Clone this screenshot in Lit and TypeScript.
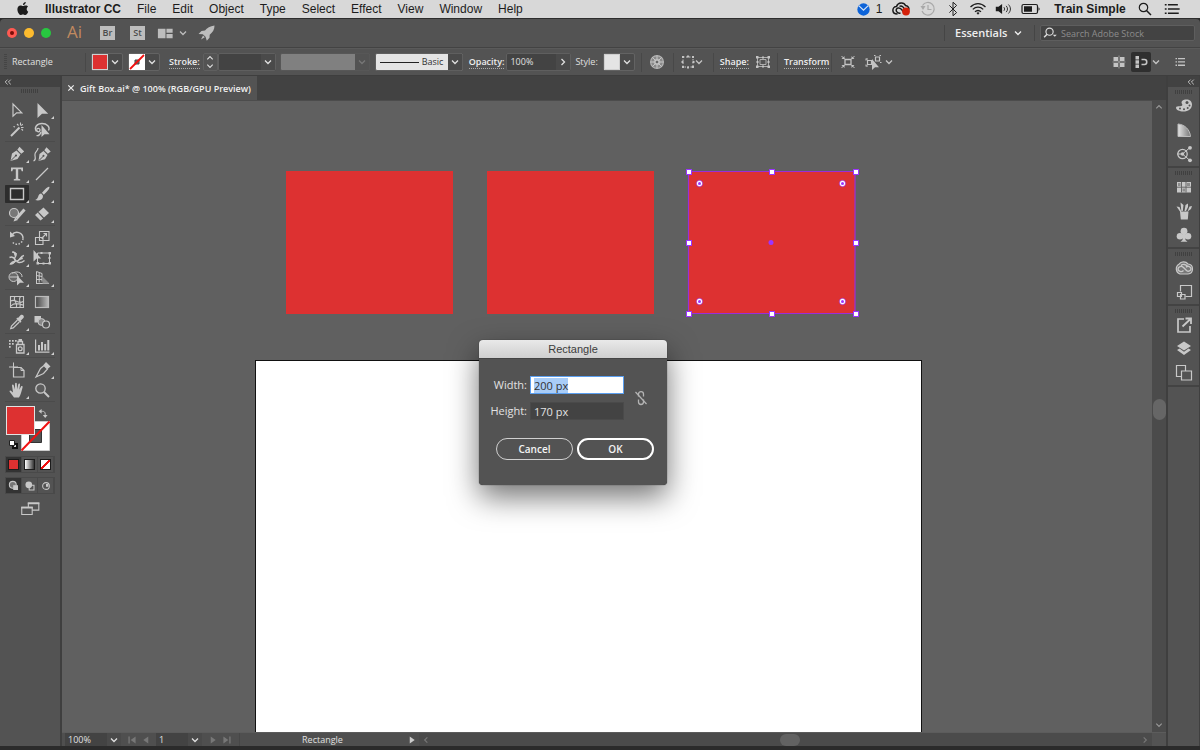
import { LitElement, html, svg, css, TemplateResult, SVGTemplateResult } from "lit";
import { customElement, property, query } from "lit/decorators.js";
import { classMap } from "lit/directives/class-map.js";

const S = (d: string, w = 1.3) => svg`<path d=${d} fill="none" stroke="currentColor" stroke-width=${w} />`;
const F = (d: string) => svg`<path d=${d} fill="currentColor" />`;

const ICONS: Record<string, SVGTemplateResult> = {
  select: S("M6 4v12.200l3.600-3.300h5.200z", 1.2),
  direct: F("M5.500 3v15l4.500-4.300h6.200z"),
  wand: svg`${S("M4 16 12.500 7.500", 2)}${S("M13.500 2.500v3M16.500 7.500h-2.500M15.800 4.200l-1.500 1.500M10 4l1.500 1.500M14.500 9l1.500 1.500M8 7l-1.500-.5", 1.1)}`,
  lasso: svg`${S("M4.500 11.500C1.500 7.500 5 3.500 10 3.500s8.500 3.500 6.500 7M4.500 9.500c1.500-2 4-1 3.500 1s-3.500 1.500-3-.5M9 12c-1 3-3 4-4.500 3.500", 1.300)}${F("M9.500 5v12l3-2.700h5z")}`,
  pen: svg`${F("M3.500 17 5 9.500 9.500 6.500l4 4L10.500 15 3.500 17zM10.300 5.700l2.200-2.900 4.700 4.700-2.900 2.200z")}<path d="M4 16.500 8.500 12" stroke="#535353" stroke-width="1"/><circle cx="9" cy="11.500" r="1.100" fill="#535353"/>`,
  curve: svg`${F("M6.500 17 7.500 10 11.500 7l4 4L13 15.200 6.500 17zM12.300 6.200l2.200-2.900 4.200 4.200-2.900 2.200z")}${S("M1.500 17c3.500-1 1-4 1.500-7 .3-2.500 3-3 3-6", 1.2)}<path d="M7 16.500 11.500 12" stroke="#535353"/><circle cx="11.500" cy="11.800" r="1" fill="#535353"/>`,
  type: F("M4 3.500h12v3.700h-1.300L14 5.200h-2.800v9.600l2 .4v1.300H6.800v-1.300l2-.4V5.200H6l-.7 2H4z"),
  line: S("M4 16 16 4", 1.3),
  rect: S("M3.500 4.500h13v11h-13z", 1.4),
  brush: F("M17.300 2.800c-1-.8-3.500 1.500-7.300 6l1.800 2c4.200-4 6.400-7 5.500-8zM9.200 9.600c-1.500.2-2.400 1-2.800 2.500-.4 1.500-1.200 3-3.200 4 3 .9 6.500.3 7.500-2.300.2-.8.3-1.500.2-2.300z"),
  shaper: svg`<circle cx="7" cy="9" r="4.500" fill="#777" stroke="currentColor" stroke-width="1.200"/>${S("M9.500 14.500 17.500 5.500", 3)}${F("M6.500 17.500l1.700-4.200 2.800 2.600z")}`,
  eraser: F("M3 11 11.500 3.500 17 9l-5 4.500L6.700 8l-.8.7 5.200 5.700-2.600 2.100z"),
  rotate: svg`${S("M5 7a6 6 0 0 1 11 3.500", 1.5)}<path d="M16 10.500A6 6 0 0 1 5 13.500" fill="none" stroke="currentColor" stroke-width="1.500" stroke-dasharray="1.500 1.500"/>${F("M3 3.500v6l5-1.500z")}`,
  scale: S("M7.500 3.500h9.500v9H7.500zM3.500 9.500h7.500v7H3.500zM9.500 10.500 14.500 5.500M11.500 5.500h3v3", 1.1),
  width: svg`${S("M5 4c3 0 5 2 3.500 4.500S7 13 10 13s3-5 7-5.500M2.500 9.500c3-1.500 4.500 0 6 2.500s4.500 4 9 .5M3 15.500c2 1 4-.5 5.500-3", 1.4)}${F("M2.500 16.500c2-3.500 4-4 7-3.500-2 1.500-3.500 4-7 3.500zM6 3l4 2.500L8 9zM10 13l5-5 1 3z")}`,
  transform: svg`${S("M5.500 5h12v10.500H5.500z", 1)}${F("M8.500 4h2v2h-2zM16.500 4h2.500v2.500h-2.500zM16.500 9h2v2h-2zM16.500 14h2.500v2.500h-2.500zM10.500 14.500h2v2h-2zM4.500 14h2.500v2.500H4.500z")}${F("M1.500 2v11.500l3.300-3h4.400z")}`,
  builder: svg`<circle cx="6.500" cy="9" r="4.500" fill="#6a6a6a" stroke="currentColor"/><path d="M5.500 5.500c3-3 10-1.500 9.500 3.500" fill="none" stroke="currentColor"/>${S("M3 9h9", 1)}${F("M10 7.500v10l3-2.700h4z")}`,
  perspective: svg`${S("M4.500 3.500v12M4.500 3.500 10 5.500v8M7.200 4.500v10M4.500 7.500 10 8.500M4.500 11.500h5.500M4 15.500h13", 1)}<path d="M10.500 8.500l7 7h-7z" fill="#8a8a8a"/>`,
  mesh: S("M3.500 4.500h13v11h-13zM4 9c4-3 7 4 12 .5M4 14c3-4 8-2 12-1M8 4.500c-3 4 4 7 1 11M13.500 4.500c-3 3 1 5-.5 11", 1.1),
  gradient: svg`<linearGradient id="tg"><stop offset="0" stop-color="#444"/><stop offset="1" stop-color="#bbb"/></linearGradient><rect x="3.500" y="4.500" width="13" height="11" fill="url(#tg)" stroke="#bbb" stroke-width="1.200"/>`,
  dropper: svg`${F("M11 6l2.700-3c1.800-1.200 4 .9 2.900 2.800L13.700 8.700l.8.800-1.200 1.200-4-4 1.200-1.200z")}${S("M10.500 8 4.500 14l-.8 2.700 2.500-.8L12.300 10", 1.200)}`,
  blend: svg`${F("M2.500 4h6.500v6.500H2.500z")}<circle cx="9.500" cy="10" r="3.400" fill="#888" stroke="currentColor"/><circle cx="14" cy="12.500" r="3.500" fill="#535353" stroke="currentColor" stroke-width="1.200"/>`,
  spray: svg`${S("M9.500 8.500h7.500v8.500H9.500zM11 8V5.500h4.500V8", 1.3)}${F("M11.500 3h3.500v2h-3.500zM2 4h1.700v1.700H2zM5 4h1.700v1.700H5zM8 4h1.700v1.700H8zM2 7h1.700v1.700H2zM5 7h1.700v1.700H5zM2 10h1.700v1.700H2z")}<circle cx="13.200" cy="12.700" r="1.900" fill="none" stroke="currentColor" stroke-width="1.300"/>`,
  graph: F("M3 3.500h1.200v12H17.500v1.200H3zM6 9h2v5.500H6zM9 6h2v8.500H9zM12.200 8h2v6.500h-2zM15.300 4h2v10.500h-2z"),
  artboard: svg`${S("M6.500 7.500h7.500l3 3v6.500H6.500z", 1.2)}${S("M14 7.500v3h3", 1)}${S("M2 7h9M6.500 2.500v9", 1)}`,
  slice: svg`${S("M4 17 8.500 8.500 12 5.500l3.500 3.500-4 4.500z", 1.2)}${F("M11.500 5l2.500-3 4.500 4.500L15.500 9z")}`,
  hand: F("M7 17.500c-1.500-2-3-4-4.500-6 0-1.200 1.300-1.100 2-.3l1.500 1.300L5 5.500c0-1.200 1.500-1.300 1.800-.1l1 4.100.3-5.900c.1-1.200 1.600-1.200 1.700 0l.3 5.600 1.200-5c.3-1.100 1.800-.8 1.700.4l-.7 5.200 1.700-3.200c.6-1 1.900-.4 1.600.7-1.200 4-1.600 7.500-3.600 10.200z"),
  zoom: svg`<circle cx="8.500" cy="8.500" r="4.700" fill="#5c5c5c" stroke="currentColor" stroke-width="1.300"/>${S("M12 12l5 5", 2)}`,
  palette: svg`${F("M9.500 4c4.500-1.500 8.500.5 8.500 4.500 0 4.500-4 7-8.500 7-4 0-7.500-1.500-7.500-3.700 0-1.600 2-1.300 4-1.500 2-.3 3-1 2-2.300C7 6.500 7.500 4.800 9.500 4z")}<g fill="#535353"><circle cx="13" cy="6.500" r="1.500"/><circle cx="15.500" cy="9.500" r="1"/><circle cx="13.700" cy="12" r="1"/><circle cx="10" cy="13.200" r="1"/><circle cx="6" cy="12.500" r="1"/></g>`,
  guide: svg`<linearGradient id="gg"><stop offset="0" stop-color="#e4e4e4"/><stop offset="1" stop-color="#777"/></linearGradient><path d="M4 4c7 .5 12 6 12.500 12.500H4z" fill="url(#gg)" stroke="#bbb"/>`,
  themes: svg`<circle cx="8.500" cy="10" r="4.700" fill="none" stroke="currentColor" stroke-width="1.300"/><circle cx="8.500" cy="10" r="1.800" fill="currentColor"/>${S("M8.500 10 16 3.500M8.500 10 16 16.500M3 10h5", 1)}<circle cx="16" cy="3.800" r="1.900" fill="currentColor"/><circle cx="16" cy="16.300" r="1.900" fill="currentColor"/>`,
  swatches: svg`${F("M3 5h14v10.500H3z")}<path d="M4 6h2.500v3H4zM13 6h3v3h-3zM8.500 11.500H11v3H8.500z" fill="#8d8d8d"/><path d="M3 10.200h14M7.500 5v10.500M12 5v10.500" stroke="#666"/>`,
  brushes: F("M6 10.500h8.500l-.7 8H6.800zM6.500 1.500l3 2.500-.7 6H7.300zM2.500 5.500l3 .5 1.800 4.500H6zM11.500 4l2.500-1.500V6l-2 4h-1.500zM15.500 5.500l2.500-.5-1 3-3.500 2.500z"),
  symbols: svg`<g fill="currentColor"><circle cx="10" cy="6.200" r="3.400"/><circle cx="6" cy="11.200" r="3.300"/><circle cx="14" cy="11.200" r="3.300"/><path d="M9 8h2l.5 7 2 1.800h-7l2-1.800z"/></g>`,
  cloud: svg`<path d="M6 16a5.400 5.400 0 0 1-1-9.800C7 3.500 11.500 3 14 6c6 .5 6 9.500 0 10z" fill="#777" stroke="currentColor" stroke-width="1.200"/>${S("M9.500 12.500C7.500 14.500 4 13.500 4 11s3.500-3.500 5.500-1.500l3 3c2 1.500 4.500.3 4.500-1.700s-3-3.500-5-1.500M7 7.500c2-2 5-1 6.500 1", 1.4)}`,
  assets: svg`${S("M6.500 9.500v-6h11v11h-6M3.500 10.500h4v4h-4z", 1.2)}${S("M6.500 12.500h4.500v4.500H6.500z", 1.2)}`,
  exporter: svg`${S("M10 4H4v13h12v-6", 1.7)}${S("M8.500 11.500 16 4.500M11.500 3.500H17V9", 1.8)}`,
  layers: F("M10 2.500 17 7l-7 4.500L3 7zM3 11l2.500-1.500L10 12.700l4.500-3.200L17 11l-7 5z"),
  boards: svg`${S("M2.500 2.500h9v11h-9z", 1.2)}<path d="M7.500 8h10v9h-10z" fill="#535353" stroke="currentColor" stroke-width="1.200"/>`,
  globe: svg`<circle cx="10" cy="10" r="7" fill="#b4b4b4"/><circle cx="10" cy="10" r="4.600" fill="none" stroke="#8a8a8a" stroke-width="2.500"/><path d="M10 3.500v13M3.500 10h13M5.400 5.400l9.200 9.200M14.600 5.400l-9.200 9.200" stroke="#c6c6c6" stroke-width="1"/><circle cx="10" cy="10" r="1.300" fill="#666"/>`,
  align: svg`<path d="M5 5h10v10H5z" fill="none" stroke="currentColor" stroke-dasharray="1.500 1.500"/>${F("M4 4h2v2H4zM14 4h2v2h-2zM4 14h2v2H4zM14 14h2v2h-2zM9 3.500h2v2H9zM9 14.500h2v2H9zM3.500 9h2v2h-2zM14.500 9h2v2h-2z")}`,
  shape: svg`${S("M4.500 5.500h11v9h-11zM7 7.500h6v5H7z", .8)}${F("M3 4h2.500v2.500H3zM14.500 4H17v2.500h-2.500zM3 13.500h2.500V16H3zM14.500 13.500H17V16h-2.500zM9 4.500h2v2H9zM9 13.500h2v2H9zM3.500 9h2v2h-2zM14.500 9h2v2h-2z")}`,
  isolate: svg`${S("M7 7.500h6v5H7z", 1.3)}${S("M3.500 4 6.500 7M16.500 4l-3 3M3.500 16l3-3M16.500 16l-3-3", 1)}${F("M6.500 4v3h-3zM13.500 4v3h3zM6.500 16v-3h-3zM13.500 16v-3h3z")}`,
  similar: svg`${S("M4.500 8.500h4v4h-4zM12.500 5h4v4h-4z", 1.2)}${S("M3 7h2M3 14h2M11 3.500h1.500M16.500 3.500H18M17 10.500h1.500M3 8.500v-2M3 14.500v-2", 1)}${F("M9 7v11l3-2.700h4z")}`,
  grid4: svg`${F("M4.500 5h4.500v4H4.500zM11 5h4.500v4H11zM4.500 11H9v4H4.500zM11 11h4.500v4H11z")}${S("M10 3.500v13M3.500 10h13", .6)}`,
  snap: svg`${F("M4.500 4H8v3.400H4.500zM4.500 8.300H8v3.400H4.500zM4.500 12.600H8V16H4.500z")}${S("M10.500 7.500h3c3 0 3 5 0 5h-3", 1.6)}`,
  list: F("M5.500 6h1.500v1.300H5.500zM8 6h7v1.300H8zM5.500 9.300h1.500v1.300H5.500zM8 9.300h7v1.300H8zM5.500 12.600h1.500v1.300H5.500zM8 12.600h7v1.300H8z"),
  layout: F("M2 5h8v10H2zM11 5h6.500v4.300H11zM11 10.400h6.500V15H11z"),
  rocket: F("M17.500 2.500c-4.500.5-7.500 2.500-9.500 5L4.500 8 1.500 11l4.300.2 2.700 2.500 1.300 4 2.700-3 .2-3c3-2.700 4.900-5 4.800-9.200zM6 12.500 4 16.500l3.800-2.300z"),
  loupe: svg`<circle cx="9.500" cy="8.500" r="4" fill="none" stroke="currentColor" stroke-width="1.300"/>${S("M6.700 11.300 3.500 14.700", 1.6)}${F("M13 12h4.500l-2.200 2.300z")}`,
  mail: svg`<circle cx="10" cy="10" r="6.500" fill="#0d63d8"/><path d="M5 6l5 4.800L15 6" fill="none" stroke="#d8e6f8" stroke-width="1.200"/>`,
  ccloud: svg`<g fill="none" stroke="#1a1a1a" stroke-width="1.500"><path d="M6.500 15C0 15 1 7.500 5.500 7.500 7 3 13 3 14.500 6.500c3 .5 4 3 3 5"/><path d="M9.500 14c-4 1-6-4-2.500-5s4 3 6 4.500M8.500 7.500c2-1.500 5 1 5 3.500"/></g><circle cx="15" cy="12.500" r="3.900" fill="#d4210a"/>`,
  clock: svg`<g fill="none" stroke="#a9a9a9" stroke-width="1.200"><path d="M4.500 6.500a6.300 6.300 0 1 1-.5 5.500M10 6v4.500h3.500"/></g><path d="M2.500 7h5L5 11z" fill="#a9a9a9"/>`,
  bluetooth: S("M6 6l8 8-4 3.500v-15L14 6l-8 8", 1.1),
  wifi: svg`${S("M2.500 8c4.500-4.500 10.500-4.500 15 0M4.800 10.400c3-3 7.400-3 10.400 0M7 12.800c2-1.800 4-1.800 6 0", 1.3)}${F("M8.500 14a2.200 2.200 0 0 1 3 0L10 15.800z")}`,
  volume: svg`${F("M2 7.500h3L9 4.500v11l-4-3H2z")}${S("M11 8c1 1.300 1 2.700 0 4M13.500 6.500c2 2 2 5 0 7M16 5c3 3 3 7 0 10", 1)}`,
  battery: svg`<rect x="1" y="5.500" width="15.500" height="9" rx="1.500" fill="none" stroke="currentColor" stroke-width="1.200"/>${F("M3 7.300h8v5.400H3zM17.500 8.200c1.500.6 1.500 3 0 3.600z")}`,
  find: svg`<circle cx="8.500" cy="8.500" r="4.200" fill="none" stroke="currentColor" stroke-width="1.200"/>${S("M11.500 11.500 16 16", 1.5)}`,
  menu: F("M2 4.500h2V6H2zM5.500 4.500h11V6h-11zM2 9.200h2v1.600H2zM5.500 9.200h13v1.600h-13zM2 14h2v1.500H2zM5.500 14h12v1.500h-12z"),
  apple: F("M12.800 3c.1 1.600-1.300 3-2.800 2.900C9.800 4.400 11.300 3.100 12.800 3zM15.200 12.700c-.6 1.600-1.700 3.300-3 3.300-.9 0-1.200-.5-2.300-.5s-1.400.5-2.300.5C6 16 4.400 12.800 4.400 10.300c0-2.500 1.500-3.900 3.100-3.900 1 0 1.800.6 2.500.6.6 0 1.600-.7 2.900-.6.9 0 1.700.5 2.200 1.200-2 1.200-1.700 4.200.1 5.100z"),
  swap: svg`${S("M4 5.500h3.500c3 0 4.500 1.500 4.500 4.500v3", 1.5)}${F("M1 5.500 6 1.500v8zM8 11.500h8l-4 5z")}`,
  screen: svg`${S("M8.500 4.500h9.500v6.500H8.500z", 1)}<path d="M2.500 8.500h9.500v6.500H2.500z" fill="#535353" stroke="currentColor"/>${F("M2 8h10.500v1.600H2zM8 4h10.500v1.600H8z")}`,
  unlink: svg`${S("M7.500 8.500V6c0-3.300 5-3.300 5 0v2.500M7.500 11.500V14c0 3.300 5 3.300 5 0v-2.500", 1.3)}${S("M4.500 4 15.500 16", 1.2)}`,
  drawNormal: svg`<circle cx="8.500" cy="8.500" r="4.300" fill="#777" stroke="currentColor" stroke-width="1.300"/><path d="M9 9h6v6H9z" fill="currentColor"/>`,
  drawBehind: svg`<path d="M9 9h6v6H9z" fill="none" stroke="currentColor" stroke-width="1.300"/><circle cx="8.500" cy="8.500" r="4.200" fill="currentColor"/>`,
  drawInside: svg`<circle cx="10" cy="10" r="4.200" fill="none" stroke="currentColor" stroke-width="1.300"/><path d="M10 7.500h3v3.500h-3z" fill="currentColor"/>`,
  chevron: S("M7 8.500 10 11.500 13 8.500", 1.3),
  chevronR: S("M8.500 7 11.500 10 8.500 13", 1.3),
  chevronL: S("M11.500 7 8.500 10 11.500 13", 1.3),
  chevronU: S("M7 11.500 10 8.500 13 11.500", 1.3),
  spin: S("M7 7 10 4 13 7M7 13 10 16 13 13", 1.2),
  collapse: S("M9.500 7 6.500 10 9.500 13M13.500 7 10.500 10 13.500 13", 1.2),
  play: F("M7.500 6 13 10l-5.500 4z"),
  back: F("M12.500 6 7 10l5.500 4z"),
  first: F("M6 6h1.500v8H6zM14 6 8.500 10l5.500 4z"),
  last: F("M12.500 6H14v8h-1.500zM6 6 11.500 10 6 14z"),
  close: S("M7 7 13 13M13 7 7 13", 1.3),
};

const icon = (name: string, size = 20): TemplateResult =>
  html`<svg class="icon" width=${size} height=${size} viewBox="0 0 20 20" aria-hidden="true">${ICONS[name]}</svg>`;

const base = css`
  :host, * { box-sizing: border-box; }
  button, input, select { font: inherit; color: inherit; margin: 0; padding: 0; border: 0; background: none; border-radius: 0; min-width: 0; outline: none; }
  a { color: inherit; text-decoration: none; }
  .icon { display: block; flex: none; }
`;

@customElement("menu-bar")
class MenuBar extends LitElement {
  static styles = [base, css`
    :host { display: flex; align-items: center; height: 19px; padding: 0 16px 0 13px; background: #d8d8d8; color: #1c1c1c; border-bottom: 1px solid #2d2d2d; font: 12px/18px "Liberation Sans", sans-serif; }
    nav { display: flex; gap: 16px; margin-left: 12px; }
    .app, .user { font-weight: 700; }
    .tray { display: flex; align-items: center; margin-left: auto; }
    .tray a { display: flex; align-items: center; justify-content: center; width: 25px; height: 18px; }
    .tray .mail { width: 36px; gap: 3px; }
    .tray .wide { width: 29px; }
    .tray .power { width: 31px; }
    .tray .user { width: 84px; padding-left: 4px; white-space: nowrap; }
  `];
  render() {
    const items = ["File", "Edit", "Object", "Type", "Select", "Effect", "View", "Window", "Help"];
    return html`
      <a href="#" aria-label="Apple menu">${icon("apple")}</a>
      <nav><a class="app" href="#">Illustrator CC</a>${items.map((t) => html`<a href="#">${t}</a>`)}</nav>
      <div class="tray">
        <a class="mail" href="#">${icon("mail", 19)}1</a>
        <a class="wide" href="#" aria-label="Creative Cloud">${icon("ccloud")}</a>
        <a href="#" aria-label="Time Machine">${icon("clock")}</a>
        <a href="#" aria-label="Bluetooth">${icon("bluetooth", 18)}</a>
        <a href="#" aria-label="Wi-Fi">${icon("wifi")}</a>
        <a href="#" aria-label="Volume">${icon("volume", 18)}</a>
        <a class="power" href="#" aria-label="Battery">${icon("battery")}</a>
        <a class="user" href="#">Train Simple</a>
        <a class="wide" href="#" aria-label="Spotlight">${icon("find")}</a>
        <a href="#" aria-label="Notifications">${icon("menu", 18)}</a>
      </div>`;
  }
}

@customElement("app-bar")
class AppBar extends LitElement {
  static styles = [base, css`
    :host { display: flex; align-items: center; height: 29px; padding: 0 5px 0 7px; border-bottom: 1px solid #434343; color: #ddd; }
    .lights { display: flex; gap: 7px; margin-right: 16px; }
    .light { width: 10px; height: 10px; border-radius: 50%; background: #ff5a52; display: grid; place-items: center; }
    .light.min { background: #fdbb2e; }
    .light.max { background: #28c840; }
    .dot { width: 4px; height: 4px; border-radius: 50%; background: #7a0c08; }
    .logo { width: 33px; color: #c1895f; font-size: 17px; line-height: 24px; padding-bottom: 3px; }
    .tile { width: 15px; height: 14px; margin-right: 15px; background: #bdbdbd; color: #4d4d4d; font-weight: 600; font-size: 9px; line-height: 14px; text-align: center; }
    .layout { display: flex; align-items: center; color: #bdbdbd; margin-left: -4px; }
    .share { margin-left: 4px; color: #bdbdbd; }
    .layout .icon + .icon { margin-left: -2px; }
    .right { display: flex; align-items: center; margin-left: auto; }
    .rule { width: 1px; height: 16px; background: #454545; }
    .space { display: flex; align-items: center; justify-content: space-between; width: 73px; margin: 0 6px 0 10px; font-size: 11px; line-height: 16px; font-weight: 600; color: #eee; }
    .search { display: flex; align-items: center; width: 155px; height: 16px; margin-left: 5px; background: #434343; border: 1px solid #5e5e5e; border-radius: 2px; color: #ddd; }
    .search input { flex: 1; font-size: 9px; padding-left: 2px; }
    .search input::placeholder { color: #8c8c8c; opacity: 1; }
  `];
  render() {
    return html`
      <div class="lights">
        <button class="light" aria-label="Close window"><span class="dot"></span></button>
        <button class="light min" aria-label="Minimize"></button>
        <button class="light max" aria-label="Zoom window"></button>
      </div>
      <span class="logo">Ai</span>
      <button class="tile">Br</button><button class="tile">St</button>
      <button class="layout" aria-label="Arrange documents">${icon("layout", 19)}${icon("chevron")}</button>
      <button class="share" aria-label="Share">${icon("rocket")}</button>
      <div class="right">
        <span class="rule"></span>
        <button class="space">Essentials ${icon("chevron")}</button>
        <span class="rule"></span>
        <label class="search">${icon("loupe", 18)}<input type="search" placeholder="Search Adobe Stock" aria-label="Search Adobe Stock" /></label>
      </div>`;
  }
}

@customElement("control-bar")
class ControlBar extends LitElement {
  static styles = [base, css`
    :host { display: flex; align-items: center; height: 28px; padding: 0 10px 0 4px; border-top: 1px solid #5a5a5a; border-bottom: 1px solid #3e3e3e; color: #e0e0e0; font-size: 9px; line-height: 12px; }
    .grip { width: 3px; height: 16px; margin-right: 5px; background: repeating-linear-gradient(#454545 0 1px, transparent 1px 2px); }
    .kind { width: 73px; }
    .rule { width: 1px; height: 19px; background: #484848; }
    .swatch { display: flex; align-items: stretch; height: 18px; margin-left: 5px; border: 1px solid #636363; border-radius: 2px; background: #4a4a4a; }
    .chip { width: 16px; height: 16px; border: 1px solid #cfcfcf; background: #dd3131; }
    .chip.plain { background: #e4e4e4; }
    .drop { width: 14px; display: flex; align-items: center; justify-content: center; overflow: hidden; }
    .name { margin-left: 9px; font-weight: 600; color: #eee; border-bottom: 1px dotted #aaa; }
    .combo { display: grid; grid-template-columns: minmax(0, 1fr) 14px; grid-template-rows: 16px; height: 18px; border: 1px solid #5f5f5f; border-radius: 2px; background: #434343; }
    .combo select, .combo input { grid-area: 1 / 1 / 2 / 3; appearance: none; width: 100%; padding-left: 3px; opacity: 1; }
    .combo .drop { grid-area: 1 / 2; pointer-events: none; background: #4a4a4a; }
    .combo button.drop { pointer-events: auto; }
    .spin { width: 15px; height: 18px; margin-left: 3px; border: 1px solid #5f5f5f; border-radius: 2px; display: flex; align-items: center; justify-content: center; overflow: hidden; }
    .weight { width: 58px; }
    .profile { width: 90px; margin-left: 4px; background: #808080; border-color: #575757; }
    .profile .drop { background: #535353; color: #777; }
    .brush { width: 88px; margin-left: 5px; background: linear-gradient(#222, #222) 4px 8px / 39px 1px no-repeat, #e4e4e4; }
    .brush select { padding-left: 46px; color: #333; }
    .brush .drop { color: #e0e0e0; }
    .opacity { width: 65px; margin-left: 2px; }
    .style { margin-left: 4px; }
    .tool { display: flex; align-items: center; justify-content: center; height: 20px; width: 20px; color: #c4c4c4; }
    .tool.globe, .tool.isolate { width: 31px; }
    .tool.align { width: 39px; }
    .tool.align .icon + .icon { margin-left: -9px; }
    .tool.shape { width: 28px; }
    .tool.similar { width: auto; }
    .tool.similar .icon + .icon { margin-left: -4px; }
    .swatch + .rule { margin-left: 6px; }
    .name + .rule { margin-left: 2px; }
    .name.near { margin-left: 6px; }
    .right { display: flex; align-items: center; gap: 2px; margin-left: auto; }
    .right .on { background: #2f2f2f; border-radius: 2px; }
    .right .more { width: 14px; margin: 0 5px 0 -4px; }
  `];
  render() {
    return html`
      <span class="grip"></span><span class="kind">Rectangle</span><span class="rule"></span>
      <button class="swatch" aria-label="Fill"><span class="chip"></span><span class="drop">${icon("chevron")}</span></button>
      <button class="swatch" aria-label="Stroke color"><svg width="16" height="16" viewBox="0 0 16 16"><path d="M0 0h16v16H0z" fill="#fff"/><path d="M6 6h4v4H6z" fill="#777" stroke="#444"/><path d="M1 15 15 1" stroke="#f01010" stroke-width="1.800"/></svg><span class="drop">${icon("chevron")}</span></button>
      <label class="name" for="weight">Stroke:</label>
      <button class="spin" aria-label="Step stroke weight">${icon("spin", 18)}</button>
      <span class="combo weight"><select id="weight"><option></option><option>1 pt</option><option>2 pt</option></select><span class="drop">${icon("chevron")}</span></span>
      <span class="combo profile"><select aria-label="Width profile" disabled><option></option></select><span class="drop">${icon("chevron")}</span></span>
      <span class="combo brush"><select aria-label="Brush definition"><option>Basic</option></select><span class="drop">${icon("chevron")}</span></span>
      <label class="name near" for="opacity">Opacity:</label>
      <span class="combo opacity"><input id="opacity" value="100%" /><button class="drop" aria-label="Opacity slider">${icon("chevronR")}</button></span>
      <span class="style">Style:</span>
      <button class="swatch" aria-label="Graphic style"><span class="chip plain"></span><span class="drop">${icon("chevron")}</span></button>
      <span class="rule"></span>
      <button class="tool globe" aria-label="Recolor artwork">${icon("globe")}</button><span class="rule"></span>
      <button class="tool align" aria-label="Align">${icon("align")}${icon("chevron")}</button><span class="rule"></span>
      <a class="name near" href="#">Shape:</a>
      <button class="tool shape" aria-label="Shape properties">${icon("shape")}</button><span class="rule"></span>
      <a class="name near" href="#">Transform</a><span class="rule"></span>
      <button class="tool isolate" aria-label="Isolate selection">${icon("isolate")}</button>
      <button class="tool similar" aria-label="Select similar">${icon("similar")}${icon("chevron")}</button>
      <div class="right">
        <button class="tool" aria-label="Snap to grid">${icon("grid4")}</button>
        <button class="tool on" aria-label="Snap to pixel">${icon("snap")}</button>
        <button class="tool more" aria-label="Snap options">${icon("chevron")}</button>
        <button class="tool" aria-label="Panel menu">${icon("list")}</button>
      </div>`;
  }
}

@customElement("tool-panel")
class ToolPanel extends LitElement {
  @property() active = "rect";
  static groups = [
    ["select", "direct", "wand", "lasso"],
    ["pen", "curve", "type", "line", "rect", "brush", "shaper", "eraser"],
    ["rotate", "scale", "width", "transform", "builder", "perspective"],
    ["mesh", "gradient", "dropper", "blend"],
    ["spray", "graph"],
    ["artboard", "slice", "hand", "zoom"],
  ];
  static single = new Set(["select", "wand", "lasso", "curve", "mesh", "gradient", "blend", "zoom", "transform", "artboard"]);
  static styles = [base, css`
    :host { display: flex; flex-direction: column; width: 62px; background: #535353; border-right: 2px solid #3f3f3f; color: #c8c8c8; }
    .head { height: 11px; display: flex; align-items: center; background: #424242; overflow: hidden; }
    .grip { width: 17px; height: 4px; margin: 2px 0 5px 21px; background: repeating-linear-gradient(90deg, #404040 0 1px, transparent 1px 2px); }
    .group { display: grid; grid-template-columns: 25px 25px; grid-auto-rows: 20px; justify-content: center; margin: 0 5px; padding: 2px 0 1px; border-bottom: 1px solid #4b4b4b; }
    .tool { position: relative; width: 24px; height: 20px; display: grid; place-items: center; border-radius: 2px; }
    .tool.on { background: linear-gradient(#2d2d2d, #2d2d2d) 0 1px / 24px 18px no-repeat; }
    .tool.more::after { content: ""; position: absolute; right: 0; bottom: 1px; border: 2px solid; border-color: transparent #d0d0d0 #d0d0d0 transparent; border-width: 1px 1px 2px 2px; }
    .colors { display: grid; grid-template-columns: 15px 14px 15px; grid-template-rows: 15px 14px 16px; margin: 4px 0 5px 6px; }
    .fill { grid-area: 1 / 1 / 3 / 3; background: #dd3131; border: 1px solid #e2e2e2; z-index: 1; }
    .stroke { grid-area: 2 / 2 / 4 / 4; }
    .stroke svg { display: block; }
    .swap { grid-area: 1 / 3; display: flex; align-items: center; justify-content: flex-end; }
    .reset { grid-area: 3 / 1; align-self: center; }
    .trio { display: grid; grid-template-columns: repeat(3, 16px); grid-template-rows: 15px; height: 17px; width: 50px; margin: 0 0 4px 5px; border: 1px solid #494949; }
    .trio button { display: flex; align-items: center; justify-content: center; overflow: hidden; border-right: 1px solid #494949; }
    .trio .on { background: #333; }
    .sw { width: 11px; height: 11px; border: 1px solid #1c1c1c; background: #dd3131; }
    .sw.grad { background: linear-gradient(90deg, #fff, #333); }
    .sw.none { background: linear-gradient(to bottom right, #fff 42%, #f01010 43% 57%, #fff 58%); }
    .screen { align-self: center; }
  `];
  render() {
    return html`
      <button class="head" aria-label="Collapse tools">${icon("collapse", 16)}</button>
      <span class="grip"></span>
      ${ToolPanel.groups.map((g) => html`<div class="group">${g.map((t) => html`
        <button class=${classMap({ tool: true, on: t === this.active, more: !ToolPanel.single.has(t) })} aria-label=${t} @click=${() => (this.active = t)}>${icon(t)}</button>`)}</div>`)}
      <div class="colors">
        <button class="fill" aria-label="Fill color"></button>
        <button class="swap" aria-label="Swap fill and stroke">${icon("swap", 12)}</button>
        <button class="stroke" aria-label="Stroke color"><svg width="29" height="30" viewBox="0 0 29 30"><path d="M.5.5h28v29H.5z" fill="#fff" stroke="#ccc"/><path d="M8.500 8.500h12v13h-12z" fill="#535353" stroke="#333"/><path d="M.5 29.500 28.500.5" stroke="#f01010" stroke-width="2"/></svg></button>
        <button class="reset" aria-label="Default colors"><svg width="9" height="9" viewBox="0 0 9 9"><path d="M3 3h6v6H3z" fill="#111"/><path d="M5 5h2v2H5z" fill="#ddd"/><path d="M.5.5h5v5h-5z" fill="#fff" stroke="#222"/></svg></button>
      </div>
      <div class="trio">
        <button class="on" aria-label="Color"><span class="sw"></span></button>
        <button aria-label="Gradient"><span class="sw grad"></span></button>
        <button aria-label="None"><span class="sw none"></span></button>
      </div>
      <div class="trio">
        <button class="on" aria-label="Draw normal">${icon("drawNormal", 16)}</button>
        <button aria-label="Draw behind">${icon("drawBehind", 16)}</button>
        <button aria-label="Draw inside">${icon("drawInside", 16)}</button>
      </div>
      <button class="screen" aria-label="Screen mode">${icon("screen", 22)}</button>`;
  }
}

@customElement("panel-dock")
class PanelDock extends LitElement {
  static groups = [
    ["palette", "guide", "themes"],
    ["swatches", "brushes", "symbols"],
    ["cloud", "assets"],
    ["exporter", "layers", "boards"],
  ];
  static styles = [base, css`
    :host { display: flex; flex-direction: column; width: 33px; background: #535353; border-left: 1px solid #3f3f3f; border-right: 1px solid #3f3f3f; color: #c8c8c8; }
    .head { height: 11px; display: flex; align-items: center; justify-content: flex-end; background: #424242; overflow: hidden; }
    .group { display: flex; flex-direction: column; align-items: center; border-bottom: 2px solid #434343; padding-top: 3px; }
    .grip { width: 17px; height: 4px; background: repeating-linear-gradient(90deg, #404040 0 1px, transparent 1px 2px); }
    .panel { height: 24px; width: 24px; display: grid; place-items: center; }
  `];
  render() {
    return html`
      <button class="head" aria-label="Expand panels">${icon("collapse", 16)}</button>
      ${PanelDock.groups.map((g) => html`<div class="group"><span class="grip"></span>${g.map((p) => html`<button class="panel" aria-label=${p}>${icon(p)}</button>`)}</div>`)}`;
  }
}

@customElement("size-dialog")
class SizeDialog extends LitElement {
  @query("#width") widthField!: HTMLInputElement;
  static styles = [base, css`
    :host { display: block; width: 188px; border-radius: 4px; overflow: hidden; background: #535353; color: #e2e2e2; font-size: 11px; box-shadow: 0 12px 30px rgba(0, 0, 0, .55), 0 0 1px #222; }
    h1 { margin: 0; background: linear-gradient(#e9e9e9, #cfcfcf); color: #3c3c3c; font: 11px/18px "Liberation Sans", sans-serif; text-align: center; border-bottom: 1px solid #444; }
    form { padding: 17px 12px 25px; }
    .fields { display: grid; grid-template-columns: 36px 94px minmax(0, 1fr); column-gap: 3px; row-gap: 8px; align-items: center; }
    label { justify-self: end; white-space: nowrap; line-height: 18px; }
    input { height: 18px; padding: 0 3px; background: #434343; border: 1px solid #4a4a4a; }
    input:focus { background: #fff; color: #333; border-color: #5b9ff0; }
    input::selection { background: #a9cdf8; color: #333; }
    .link { grid-area: 1 / 3 / 3 / 4; justify-self: center; color: #b4b4b4; }
    .actions { display: flex; gap: 4px; margin: 18px 0 0 5px; }
    .actions button { width: 77px; height: 22px; border: 1px solid #d0d0d0; border-radius: 11px; font-weight: 600; font-size: 10px; color: #f4f4f4; }
    .actions .ok { border: 2px solid #fff; }
  `];
  firstUpdated() {
    this.widthField.focus();
    this.widthField.select();
  }
  render() {
    return html`
      <h1>Rectangle</h1>
      <form @submit=${(e: Event) => e.preventDefault()}>
        <div class="fields">
          <label for="width">Width:</label><input id="width" value="200 px" />
          <button type="button" class="link" aria-label="Constrain proportions">${icon("unlink")}</button>
          <label for="height">Height:</label><input id="height" value="170 px" />
        </div>
        <div class="actions"><button type="button">Cancel</button><button class="ok">OK</button></div>
      </form>`;
  }
}

@customElement("document-window")
class DocumentWindow extends LitElement {
  static styles = [base, css`
    :host { display: grid; grid-template: 24px minmax(0, 1fr) 14px / minmax(0, 1fr) 14px; flex: 1; min-width: 0; background: #424242; border-right: 1px solid #3f3f3f; font-size: 9px; color: #e0e0e0; }
    .tabs { grid-column: 1 / 3; display: flex; }
    .tab { display: flex; align-items: center; height: 24px; padding-right: 6px; background: #535353; color: #f0f0f0; font-weight: 600; white-space: nowrap; }
    .canvas { position: relative; overflow: hidden; background: #606060; border-top: 1px solid #4c4c4c; }
    .artboard { position: absolute; left: 193px; top: 259px; bottom: 0; width: 667px; background: #fff; border: 1px solid #111; border-bottom: 0; }
    .shape { position: absolute; top: 70px; width: 167px; height: 143px; background: #dd3131; }
    .selection { position: absolute; left: 622px; top: 65px; }
    size-dialog { position: absolute; left: 417px; top: 239px; }
    .vbar { display: flex; flex-direction: column; align-items: center; justify-content: space-between; background: #4b4b4b; color: #999; }
    .vbar .thumb { width: 13px; height: 21px; margin-bottom: 14px; border-radius: 7px; background: #666; }
    .vbar button { height: 14px; display: flex; align-items: center; justify-content: center; overflow: hidden; width: 14px; }
    .status { grid-column: 1 / 3; display: flex; align-items: center; background: #4f4f4f; border-top: 1px solid #5c5c5c; line-height: 13px; }
    .pick { display: grid; grid-template: 13px / minmax(0, 1fr) 14px; background: #434343; }
    .pick select { grid-area: 1 / 1 / 2 / 3; appearance: none; width: 100%; padding-left: 3px; }
    .pick .drop { grid-area: 1 / 2; pointer-events: none; background: #4a4a4a; }
    .drop, .nav { display: flex; align-items: center; justify-content: center; overflow: hidden; height: 13px; }
    .zoomlevel { width: 56px; margin: 0 4px 0 3px; }
    .board { width: 46px; margin: 0 4px 0 3px; }
    .nav { width: 14px; color: #777; }
    .kind { width: 166px; margin-left: 5px; text-align: center; border-left: 1px solid #474747; }
    .nav.more { color: #ccc; }
    .hbar { flex: 1; align-self: stretch; display: flex; align-items: center; justify-content: space-between; background: #4b4b4b; color: #999; }
    .hbar .thumb { width: 20px; height: 12px; border-radius: 6px; background: #626262; margin-left: 8px; }
    .corner { width: 14px; align-self: stretch; background: #535353; }
  `];
  render() {
    const handles = [[4, 5], [87, 5], [171, 5], [4, 76], [171, 76], [4, 147], [87, 147], [171, 147]];
    const corners = [[15, 17], [158, 17], [15, 135], [158, 135]];
    return html`
      <div class="tabs"><div class="tab"><button aria-label="Close document">${icon("close", 18)}</button>Gift Box.ai* @ 100% (RGB/GPU Preview)</div></div>
      <div class="canvas">
        <div class="artboard"></div>
        ${[224, 425, 626].map((x) => html`<div class="shape" style="left:${x}px"></div>`)}
        <svg class="selection" width="180" height="155" viewBox="0 0 180 155">
          <path d="M4.500 5.500h166.500v142H4.500z" fill="none" stroke="#9a2fd8" stroke-width="1.200" />
          ${handles.map(([x, y]) => svg`<rect x=${x - 1.5} y=${y - 1.5} width="5" height="5" fill="#fff" stroke="#9b35ff" />`)}
          ${corners.map(([x, y]) => svg`<circle cx=${x + 0.5} cy=${y + 0.5} r="2.200" fill="#9b35ff" stroke="#fff" stroke-width="1.400" /><circle cx=${x + 0.5} cy=${y + 0.5} r="3.200" fill="none" stroke="#9b35ff" stroke-width=".6" />`)}
          <circle cx="87" cy="76.500" r="2.500" fill="#9b35ff" />
        </svg>
        <size-dialog></size-dialog>
      </div>
      <div class="vbar">
        <button aria-label="Scroll up">${icon("chevronU", 18)}</button><span class="thumb"></span><button aria-label="Scroll down">${icon("chevron", 18)}</button>
      </div>
      <div class="status">
        <span class="pick zoomlevel"><select aria-label="Zoom level"><option>100%</option></select><span class="drop">${icon("chevron")}</span></span>
        <button class="nav" aria-label="First artboard">${icon("first", 18)}</button>
        <button class="nav" aria-label="Previous artboard">${icon("back", 18)}</button>
        <span class="pick board"><select aria-label="Artboard"><option>1</option></select><span class="drop">${icon("chevron")}</span></span>
        <button class="nav" aria-label="Next artboard">${icon("play", 18)}</button>
        <button class="nav" aria-label="Last artboard">${icon("last", 18)}</button>
        <span class="kind">Rectangle</span>
        <button class="nav more" aria-label="Status options">${icon("play", 18)}</button>
        <div class="hbar"><button class="nav" aria-label="Scroll left">${icon("chevronL", 18)}</button><span class="thumb"></span><button class="nav" aria-label="Scroll right">${icon("chevronR", 18)}</button></div>
        <span class="corner"></span>
      </div>`;
  }
}

@customElement("app-root")
class AppRoot extends LitElement {
  static styles = css`
    :host { display: flex; flex-direction: column; height: 100vh; background: #2b2b2b; font-family: "Open Sans", sans-serif; }
    .window { flex: 1; min-height: 0; display: flex; flex-direction: column; margin-bottom: 4px; background: #535353; border-radius: 4px 4px 0 0; overflow: hidden; }
    .work { flex: 1; min-height: 0; display: flex; }
  `;
  render() {
    return html`
      <menu-bar></menu-bar>
      <div class="window">
        <app-bar></app-bar>
        <control-bar></control-bar>
        <div class="work"><tool-panel></tool-panel><document-window></document-window><panel-dock></panel-dock></div>
      </div>`;
  }
}
